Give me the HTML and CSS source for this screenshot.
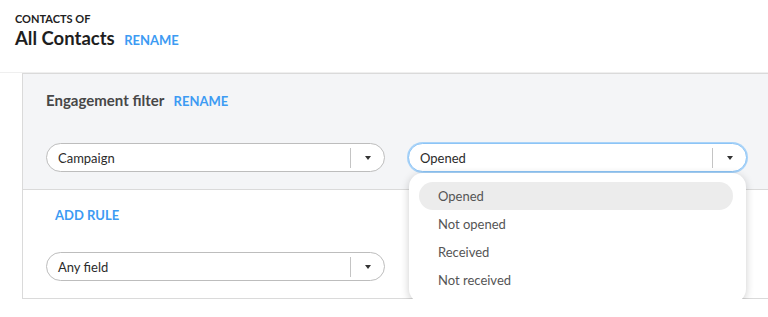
FILE: index.html
```html
<!DOCTYPE html>
<html lang="en">
<head>
  <meta charset="UTF-8" />
  <meta name="viewport" content="width=device-width, initial-scale=1.0"/>
  <title>All Contacts - Engagement filter</title>
  <link rel="stylesheet" href="styles.css">
</head>
<body>
  <div class="header">
    <div class="eyebrow">Contacts of</div>
    <h1>All Contacts <a class="link" href="#">Rename</a></h1>
  </div>

  <div class="content">
    <div class="panel">
      <div class="filter-head">
        <div class="filter-title">Engagement filter <a class="link" href="#">Rename</a></div>

        <div class="select-row">
          <div class="select">
            <span class="select-value">Campaign</span>
            <span class="select-sep"></span>
            <span class="select-arrow"></span>
          </div>

          <div class="select focused">
            <span class="select-value">Opened</span>
            <span class="select-sep"></span>
            <span class="select-arrow"></span>

            <ul class="menu">
              <li class="active">Opened</li>
              <li>Not opened</li>
              <li>Received</li>
              <li>Not received</li>
            </ul>
          </div>
        </div>
      </div>

      <div class="filter-body">
        <a class="link add-rule" href="#">Add rule</a>

        <div class="select-row">
          <div class="select">
            <span class="select-value">Any field</span>
            <span class="select-sep"></span>
            <span class="select-arrow"></span>
          </div>
        </div>
      </div>
    </div>
  </div>
</body>
</html>
```

FILE: styles.css
```css
body {
  font-family: 'Lato', 'Open Sans', sans-serif;
  background: #fff;
  color: #222;
  margin: 0;
  overflow: hidden;
}

.link {
  color: #3d9bf3;
  font-weight: 700;
  font-size: 13px;
  text-transform: uppercase;
  text-decoration: none;
}

.header {
  padding: 12px 15px 20px;
}

.eyebrow {
  font-size: 11px;
  line-height: 14px;
  font-weight: 700;
  text-transform: uppercase;
  color: #222;
}

.header h1 {
  margin: 0;
  font-size: 18.5px;
  line-height: 24px;
  font-weight: 700;
  color: #1e1e1e;
}

.header h1 .link {
  margin-left: 5px;
}

.content {
  border-top: 1px solid #efefef;
  padding-left: 22px;
}

.panel {
  border: 1px solid #dadada;
  margin-right: -20px;
}

.filter-head {
  background: #f4f5f7;
  border-bottom: 1px solid #dadada;
  padding: 17px 23px 17px;
}

.filter-title {
  font-size: 15px;
  line-height: 18px;
  font-weight: 700;
  color: #474747;
  margin-bottom: 33px;
}

.filter-title .link {
  margin-left: 6px;
}

.filter-body {
  background: #fff;
  padding: 17px 23px 17px;
}

.add-rule {
  display: block;
  line-height: 16px;
  margin-left: 9px;
  margin-bottom: 29px;
}

.select-row {
  display: flex;
  gap: 23px;
}

.select {
  position: relative;
  box-sizing: border-box;
  width: 339px;
  height: 29px;
  display: flex;
  align-items: center;
  background: #fff;
  border: 1px solid #bdbdbd;
  border-radius: 15px;
  font-size: 13px;
  color: #2b2b2b;
}

.select.focused {
  border-color: #8cc4f6;
  box-shadow: 0 0 0 1px #a9d3f8;
}

.select-value {
  flex: 1;
  padding-left: 11px;
}

.select-sep {
  width: 1px;
  height: 20px;
  background: #c4c4c4;
}

.select-arrow {
  width: 33px;
  display: flex;
  justify-content: center;
}

.select-arrow::after {
  content: "";
  border-top: 4px solid #333;
  border-left: 3px solid transparent;
  border-right: 3px solid transparent;
}

.menu {
  position: absolute;
  top: 29px;
  left: 0;
  right: 0;
  margin: 0;
  padding: 9px 13px 9px 10px;
  list-style: none;
  background: #fff;
  border-radius: 14px;
  box-shadow: 0 2px 9px rgba(0, 0, 0, 0.2);
  z-index: 10;
}

.menu li {
  height: 28px;
  line-height: 28px;
  padding-left: 19px;
  border-radius: 14px;
  font-size: 13px;
  color: #555;
}

.menu li.active {
  background: #ececec;
}
```
